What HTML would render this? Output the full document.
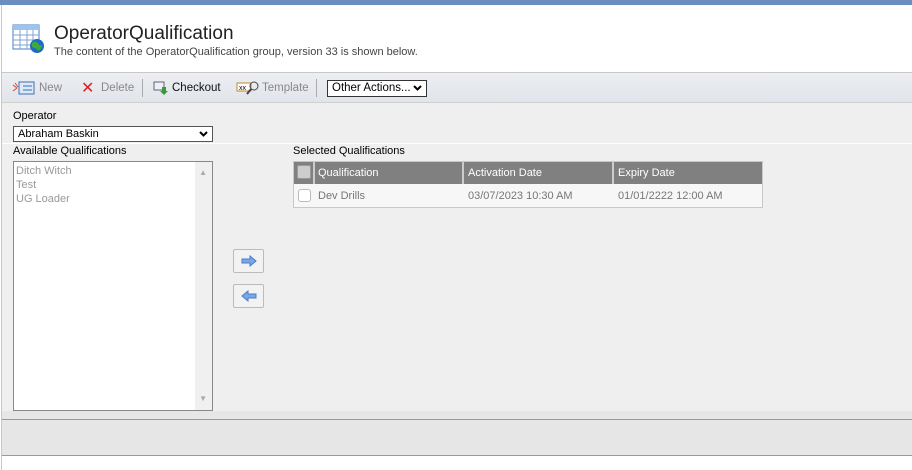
<!DOCTYPE html>
<html><head><meta charset="utf-8"><style>
*{margin:0;padding:0;box-sizing:border-box}
body{width:912px;height:470px;overflow:hidden;background:#fff;font-family:"Liberation Sans",Tahoma,sans-serif;position:relative;font-size:11px;color:#000}
.abs{position:absolute}
.tb{font-size:11.5px}
</style></head><body>
<div class="abs" style="left:0;top:0;width:912px;height:5px;background:#6c8ebf"></div>
<div class="abs" style="left:1px;top:5px;width:1px;height:465px;background:#c8c8c8"></div>
<svg class="abs" style="left:12px;top:24px" width="34" height="30" viewBox="0 0 34 30">
<rect x="1" y="1" width="26" height="24" fill="#fff" stroke="#4a7cc0"/>
<rect x="1" y="1" width="26" height="5" fill="#9cc4ee"/>
<g stroke="#7ea6d8" stroke-width="1"><line x1="1" y1="11" x2="27" y2="11"/><line x1="1" y1="16" x2="27" y2="16"/><line x1="1" y1="21" x2="27" y2="21"/><line x1="8" y1="6" x2="8" y2="25"/><line x1="15" y1="6" x2="15" y2="25"/><line x1="21" y1="6" x2="21" y2="25"/></g>
<circle cx="25" cy="22" r="7" fill="#1f6bc4"/><path d="M20 19q3-3 6 0q1 3 4 2q0 4-4 6q-1-3-4-3q-3-1-2-5z" fill="#3caa3c"/>
</svg>
<div class="abs" style="left:54px;top:23px;font-size:19px;color:#222">OperatorQualification</div>
<div class="abs" style="left:54px;top:46px;font-size:11px;color:#444">The content of the OperatorQualification group, version 33 is shown below.</div>
<div class="abs" style="left:2px;top:72px;width:910px;height:1px;background:#c8c8c8"></div>
<div class="abs" style="left:2px;top:73px;width:910px;height:30px;background:linear-gradient(#eceef2,#e1e4ea)"></div>
<div class="abs" style="left:2px;top:102px;width:910px;height:1px;background:#d0d0d0"></div>
<svg class="abs" style="left:12px;top:81px" width="24" height="14"><path d="M1 4l4 3M1 10l4-3M3 2l3 4" stroke="#e04020" stroke-width="1"/><rect x="7" y="1" width="15" height="12" fill="#dce9f8" stroke="#3d6fb5"/><g stroke="#3d6fb5"><line x1="11" y1="5" x2="20" y2="5"/><line x1="11" y1="9" x2="20" y2="9"/></g></svg>
<div class="abs tb" style="left:39px;top:82px;color:#888">New</div>
<div class="abs" style="left:81px;top:78px;color:#e02020;font-size:16px">✕</div>
<div class="abs tb" style="left:101px;top:82px;color:#888">Delete</div>
<div class="abs" style="left:142px;top:79px;width:1px;height:18px;background:#aaa"></div>
<svg class="abs" style="left:153px;top:81px" width="16" height="14"><rect x="1" y="1" width="10" height="8" fill="#eef" stroke="#666"/><path d="M9 6h4v4h2l-4 4-4-4h2z" fill="#3a9a3a"/></svg>
<div class="abs tb" style="left:172px;top:82px;color:#111">Checkout</div>
<svg class="abs" style="left:236px;top:80px" width="24" height="16"><rect x="1" y="3" width="14" height="8" fill="#fff" stroke="#c08a2a"/><text x="3" y="10" font-size="7" font-family="Liberation Sans">xx</text><circle cx="18" cy="6" r="4" fill="none" stroke="#444"/><line x1="15" y1="9" x2="11" y2="14" stroke="#444" stroke-width="2"/></svg>
<div class="abs tb" style="left:262px;top:82px;color:#888">Template</div>
<div class="abs" style="left:316px;top:79px;width:1px;height:18px;background:#aaa"></div>
<div class="abs tb" style="left:327px;top:80px;width:100px;height:17px;border:1px solid #333;background:#fff;padding:1px 0 0 4px">Other Actions...<svg style="position:absolute;right:4px;top:4px" width="9" height="7"><path d="M1 1l3.5 3.5L8 1" fill="none" stroke="#000" stroke-width="2"/></svg></div>
<div class="abs" style="left:2px;top:103px;width:910px;height:308px;background:#efefef"></div>
<div class="abs" style="left:13px;top:110px">Operator</div>
<div class="abs" style="left:13px;top:126px;width:200px;height:16px;border:1px solid #555;background:#fff;padding:1px 0 0 4px">Abraham Baskin<svg style="position:absolute;right:4px;top:4px" width="9" height="7"><path d="M1 1l3.5 3.5L8 1" fill="none" stroke="#000" stroke-width="2"/></svg></div>
<div class="abs" style="left:2px;top:143px;width:910px;height:1px;background:#fff"></div>
<div class="abs" style="left:13px;top:145px">Available Qualifications</div>
<div class="abs" style="left:13px;top:161px;width:200px;height:250px;border:1px solid #888;background:#fff;color:#999;padding:2px 0 0 2px;line-height:14px">Ditch Witch<br>Test<br>UG Loader
<div class="abs" style="right:0;top:0;width:17px;height:248px;background:#f0f0f0"></div>
<div class="abs" style="right:5px;top:4px;color:#aaa;font-size:8px">▲</div>
<div class="abs" style="right:5px;bottom:4px;color:#aaa;font-size:8px">▼</div>
</div>
<div class="abs" style="left:233px;top:249px;width:31px;height:24px;border:1px solid #bbb;border-radius:2px;background:#f2f2f2"></div>
<svg class="abs" style="left:241px;top:255px" width="16" height="12"><path d="M1 4h8v-3l6 5-6 5v-3h-8z" fill="#7aa7e8" stroke="#4a7cc8"/></svg>
<div class="abs" style="left:233px;top:284px;width:31px;height:24px;border:1px solid #bbb;border-radius:2px;background:#f2f2f2"></div>
<svg class="abs" style="left:241px;top:290px" width="16" height="12"><path d="M15 4h-8v-3l-6 5 6 5v-3h8z" fill="#7aa7e8" stroke="#4a7cc8"/></svg>
<div class="abs" style="left:293px;top:145px">Selected Qualifications</div>
<div class="abs" style="left:293px;top:161px;width:470px;height:47px;border:1px solid #c8c8c8;background:#f7f7f7"></div>
<div class="abs" style="left:294px;top:162px;width:468px;height:22px;background:#808080"></div>
<div class="abs" style="left:297px;top:165px;width:14px;height:14px;background:#ccc;border:1px solid #999;border-radius:2px"></div>
<div class="abs" style="left:313px;top:162px;width:2px;height:22px;background:#ccc"></div>
<div class="abs" style="left:462px;top:162px;width:2px;height:22px;background:#ccc"></div>
<div class="abs" style="left:612px;top:162px;width:2px;height:22px;background:#ccc"></div>
<div class="abs" style="left:318px;top:167px;color:#fff">Qualification</div>
<div class="abs" style="left:468px;top:167px;color:#fff">Activation Date</div>
<div class="abs" style="left:618px;top:167px;color:#fff">Expiry Date</div>
<div class="abs" style="left:298px;top:189px;width:13px;height:13px;background:#fff;border:1px solid #bbb;border-radius:3px"></div>
<div class="abs" style="left:318px;top:190px;color:#777">Dev Drills</div>
<div class="abs" style="left:468px;top:190px;color:#777">03/07/2023 10:30 AM</div>
<div class="abs" style="left:618px;top:190px;color:#777">01/01/2222 12:00 AM</div>
<div class="abs" style="left:2px;top:411px;width:910px;height:44px;background:#e6e6e6"></div>
<div class="abs" style="left:2px;top:419px;width:910px;height:1px;background:#999"></div>
<div class="abs" style="left:2px;top:455px;width:910px;height:1px;background:#999"></div>
</body></html>
